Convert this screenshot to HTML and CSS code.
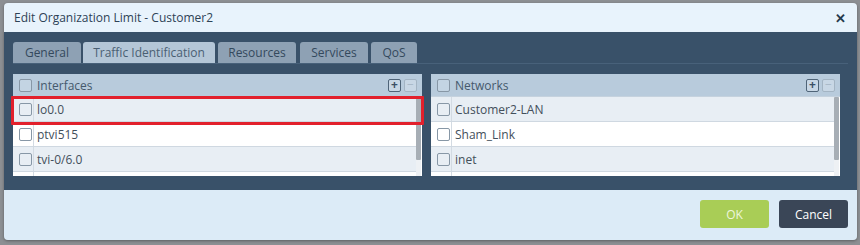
FILE: index.html
```html
<!DOCTYPE html>
<html>
<head>
<meta charset="utf-8">
<link rel="stylesheet" href="styles.css">
</head>
<body>
<div class="dialog">
  <div class="titlebar">
    <span class="title">Edit Organization Limit - Customer2</span>
    <span class="close">&#x2715;</span>
  </div>
  <div class="body">
    <div class="tabs">
      <div class="tab t-general">General</div>
      <div class="tab active t-traffic">Traffic Identification</div>
      <div class="tab t-res">Resources</div>
      <div class="tab t-serv">Services</div>
      <div class="tab t-qos">QoS</div>
    </div>
    <div class="panels">
      <div class="panel">
        <div class="phead">
          <span class="cb"></span><span class="hlabel">Interfaces</span>
          <span class="pm plus">+</span><span class="pm minus">&minus;</span>
        </div>
        <div class="rows">
          <div class="row alt"><span class="cb"></span><span class="label">lo0.0</span></div>
          <div class="row"><span class="cb"></span><span class="label">ptvi515</span></div>
          <div class="row alt"><span class="cb"></span><span class="label">tvi-0/6.0</span></div>
          <div class="row"><span class="cb"></span><span class="label"></span></div>
          <div class="scroll"><div class="thumb"></div></div>
        </div>
        <div class="highlight"></div>
      </div>
      <div class="panel">
        <div class="phead">
          <span class="cb"></span><span class="hlabel">Networks</span>
          <span class="pm plus">+</span><span class="pm minus">&minus;</span>
        </div>
        <div class="rows">
          <div class="row alt"><span class="cb"></span><span class="label">Customer2-LAN</span></div>
          <div class="row"><span class="cb"></span><span class="label">Sham_Link</span></div>
          <div class="row alt"><span class="cb"></span><span class="label">inet</span></div>
          <div class="row"><span class="cb"></span><span class="label"></span></div>
          <div class="scroll"><div class="thumb"></div></div>
        </div>
      </div>
    </div>
  </div>
  <div class="footer">
    <button class="btn ok">OK</button>
    <button class="btn cancel">Cancel</button>
  </div>
</div>
</body>
</html>
```

FILE: styles.css
```css
html, body {
  margin: 0;
  padding: 0;
  height: 245px;
  overflow: hidden;
  background: #8c8f93;
  font-family: "Open Sans", "Noto Sans", sans-serif;
}
.dialog {
  margin: 3px 0 0 4px;
  width: 853px;
  height: 237px;
  border-radius: 4px;
  overflow: hidden;
  display: flex;
  flex-direction: column;
  box-shadow: 0 1px 3px rgba(0,0,0,0.35);
}
.titlebar {
  height: 29px;
  flex: none;
  background: #e8f3fc;
  display: flex;
  align-items: center;
  padding: 0 9px 0 10px;
  color: #2e4256;
}
.title {
  font-size: 12px;
  flex: 1;
  padding-bottom: 1px;
}
.close {
  font-size: 13px;
  font-weight: bold;
  color: #25384b;
  margin-right: 2px;
}
.body {
  height: 158px;
  flex: none;
  background: #395169;
  padding: 10px 9px 0 9px;
  box-sizing: border-box;
}
.tabs {
  display: flex;
  height: 21px;
  border-bottom: 1px solid #48617a;
  width: 835px;
}
.tab {
  background: #8ea1b4;
  color: #34495d;
  font-size: 12px;
  line-height: 21px;
  text-align: center;
  border-radius: 3px 3px 0 0;
  box-sizing: border-box;
}
.tab.active { background: #b4c6d7; color: #4a5f73; }
.t-general { width: 68px; }
.t-traffic { width: 132px; margin-left: 2px; }
.t-res { width: 78px; margin-left: 3px; }
.t-serv { width: 68px; margin-left: 4px; }
.t-qos { width: 46px; margin-left: 3px; }
.panels {
  display: flex;
  gap: 9px;
  margin-top: 10px;
}
.panel {
  position: relative;
  width: 409px;
  height: 102px;
  background: #ffffff;
}
.phead {
  height: 23px;
  background: #b8cbdc;
  display: flex;
  align-items: center;
  padding-left: 6px;
  padding-right: 5px;
  border-bottom: 1px solid #c5d2de;
  box-sizing: border-box;
}
.cb {
  width: 11px;
  height: 11px;
  border: 1px solid #8797a6;
  border-radius: 2px;
  background: transparent;
  flex: none;
}
.phead .cb { background: #c3d4e3; }
.hlabel {
  margin-left: 5px;
  font-size: 12px;
  color: #45596c;
  flex: 1;
}
.pm {
  width: 11px;
  height: 11px;
  border: 1px solid #4f6478;
  border-radius: 2px;
  font-size: 12px;
  line-height: 10px;
  text-align: center;
  color: #3b5066;
  font-weight: bold;
  background: #c8d7e5;
  margin-left: 3px;
}
.pm.minus {
  border-color: #a3b4c3;
  color: #a6b6c5;
  font-weight: normal;
}
.rows {
  position: relative;
  height: 79px;
  overflow: hidden;
  padding-right: 6px;
}
.row {
  height: 25px;
  display: flex;
  align-items: center;
  padding-left: 6px;
  border-bottom: 1px solid #cfd8e1;
  box-sizing: border-box;
  background: #ffffff;
  background-image: linear-gradient(#d3dbe3, #d3dbe3);
  background-size: 1px 100%;
  background-position: 20px 0;
  background-repeat: no-repeat;
}
.row.alt { background-color: #e8eef4; }
.label {
  margin-left: 5px;
  font-size: 12px;
  color: #434f5b;
}
.scroll {
  position: absolute;
  top: 0;
  right: 1px;
  width: 5px;
  bottom: 0;
  background: #eef1f4;
}
.thumb {
  width: 5px;
  height: 63px;
  background: #a7aeb5;
  border-radius: 1px;
}
.highlight {
  position: absolute;
  left: -2px;
  top: 22px;
  width: 413px;
  height: 29px;
  border: 3px solid #e2202c;
  box-sizing: border-box;
  border-radius: 1px;
}
.footer {
  flex: 1;
  background: #dcebf7;
  display: flex;
  justify-content: flex-end;
  align-items: flex-start;
  padding: 10px 9px 0 0;
  gap: 10px;
}
.btn {
  width: 69px;
  height: 28px;
  border: none;
  border-radius: 3px;
  font-family: "Open Sans", "Noto Sans", sans-serif;
  font-size: 12px;
  color: #ffffff;
  padding: 0;
}
.ok { background: #a9cd56; color: #eef6dc; }
.cancel { background: #3a4657; }
```
